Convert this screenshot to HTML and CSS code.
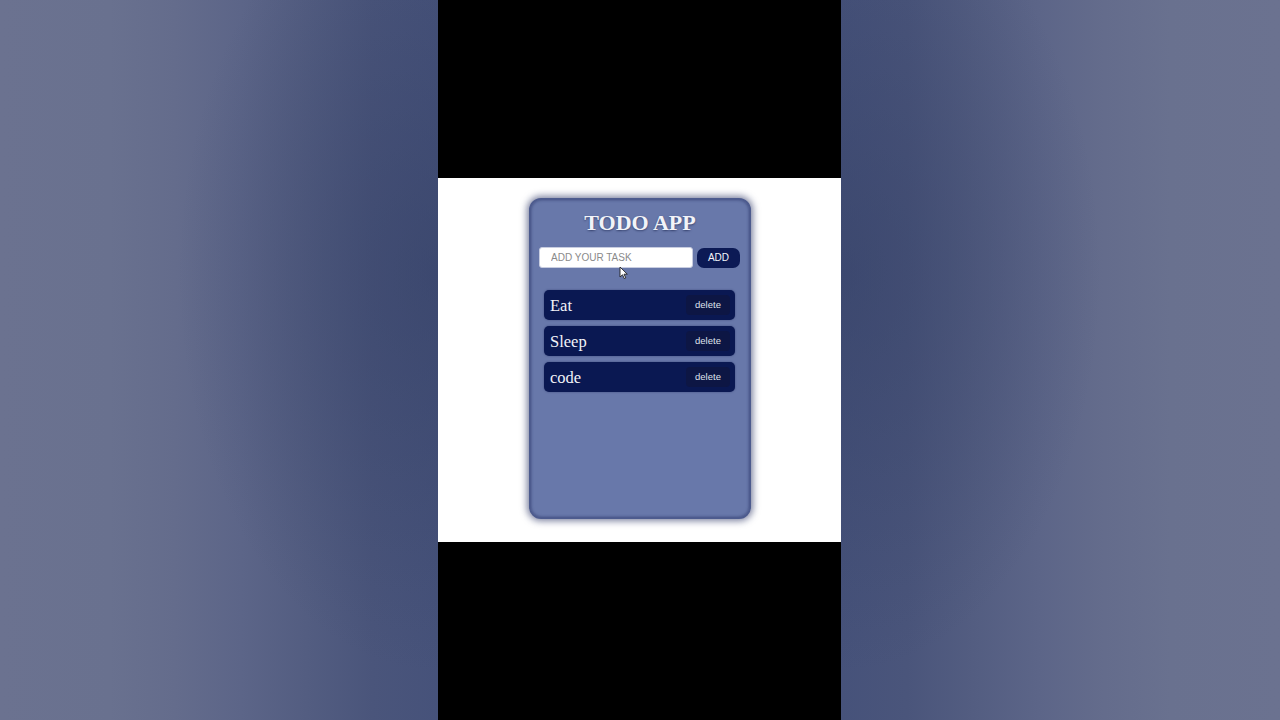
FILE: index.html
```html
<!DOCTYPE html>
<html>
<head>
<meta charset="utf-8">
<link rel="stylesheet" href="styles.css">
</head>
<body>
<div class="frame">
  <div class="side side-left"></div>
  <div class="center">
    <div class="bar"></div>
    <div class="stage">
      <div class="card">
        <h1 class="title">TODO APP</h1>
        <div class="entry">
          <input class="task-input" type="text" placeholder="ADD YOUR TASK">
          <button class="add-btn">ADD</button>
        </div>
        <ul class="list">
          <li class="item"><span class="item-text">Eat</span><button class="del-btn">delete</button></li>
          <li class="item"><span class="item-text">Sleep</span><button class="del-btn">delete</button></li>
          <li class="item"><span class="item-text">code</span><button class="del-btn">delete</button></li>
        </ul>
        <svg class="cursor" width="10" height="14" viewBox="0 0 10 14"><path d="M1 1 L1 11 L3.5 8.8 L5.3 12.6 L6.8 11.9 L5 8.2 L8.3 8.2 Z" fill="#ffffff" stroke="#222" stroke-width="0.9" stroke-linejoin="round"/></svg>
      </div>
    </div>
    <div class="bar"></div>
  </div>
  <div class="side side-right"></div>
</div>
</body>
</html>
```

FILE: styles.css
```css
* { box-sizing: border-box; }
html, body { margin: 0; padding: 0; width: 1280px; height: 720px; overflow: hidden; }
body { background: #000; }

.frame {
  display: flex;
  width: 1280px;
  height: 720px;
}

.side {
  height: 720px;
}
.side-left {
  width: 438px;
  background:
    radial-gradient(ellipse 260px 400px at 100% 38%, rgba(52, 64, 102, 0.55), rgba(52, 64, 102, 0) 100%),
    linear-gradient(to right, #6b7290 0%, #69718f 25%, #646c8c 40%, #5c6588 55%, #535d81 70%, #4a557b 85%, #46527a 100%);
}
.side-right {
  width: 439px;
  background:
    radial-gradient(ellipse 260px 400px at 0% 38%, rgba(52, 64, 102, 0.55), rgba(52, 64, 102, 0) 100%),
    linear-gradient(to left, #6b7290 0%, #69718f 25%, #646c8c 40%, #5c6588 55%, #535d81 70%, #4a557b 85%, #46527a 100%);
}

.center {
  width: 403px;
  display: flex;
  flex-direction: column;
}
.bar {
  height: 178px;
  background: #000;
}
.stage {
  height: 364px;
  background: #fff;
  display: flex;
  justify-content: center;
  padding-top: 20px;
}

.card {
  position: relative;
  width: 222px;
  height: 321px;
  margin-left: 1px;
  background: #6878aa;
  border: 2px solid #4d5b8e;
  border-radius: 12px;
  box-shadow: 0 0 7px 2px rgba(35, 45, 95, 0.6), inset 0 0 3px rgba(30, 40, 90, 0.6);
  padding: 10px 8px 0 8px;
}

.title {
  margin: 0;
  font-family: "Liberation Serif", "Times New Roman", serif;
  font-weight: bold;
  font-size: 22px;
  line-height: 26px;
  text-align: center;
  color: #f2f3f8;
  text-shadow: 0 1px 2px rgba(20, 30, 70, 0.6);
}

.entry {
  display: flex;
  align-items: center;
  gap: 4px;
  margin-top: 11px;
  height: 21px;
}
.task-input {
  width: 154px;
  height: 21px;
  border: 1px solid #c8cde0;
  border-radius: 3px;
  background: #fff;
  padding: 0 0 0 11px;
  font-family: "Liberation Sans", Arial, sans-serif;
  font-size: 10px;
  outline: none;
}
.task-input::placeholder { color: #8a8a8a; }
.add-btn {
  width: 43px;
  height: 20px;
  border: none;
  border-radius: 7px;
  background: #0c1a55;
  color: #f4f5fa;
  font-family: "Liberation Sans", Arial, sans-serif;
  font-size: 10px;
  padding: 0;
}

.list {
  list-style: none;
  margin: 22px 0 0 0;
  padding: 0 6px 0 5px;
  display: flex;
  flex-direction: column;
  gap: 6px;
}
.item {
  height: 30px;
  background: #0a1852;
  border-radius: 5px;
  display: flex;
  align-items: center;
  justify-content: space-between;
  padding: 0 5px 0 6px;
  box-shadow: 0 0 2px rgba(20, 30, 80, 0.5);
}
.item-text {
  font-family: "Liberation Serif", "Times New Roman", serif;
  font-size: 16.5px;
  color: #f2f3f8;
  line-height: 20px;
  padding-top: 1px;
}
.del-btn {
  width: 44px;
  height: 20px;
  border: none;
  border-radius: 4px;
  background: #0d1644;
  color: #dfe2ec;
  font-family: "Liberation Sans", Arial, sans-serif;
  font-size: 9.5px;
  padding: 0 0 2px 0;
}

.cursor {
  position: absolute;
  left: 88px;
  top: 66px;
}
```
